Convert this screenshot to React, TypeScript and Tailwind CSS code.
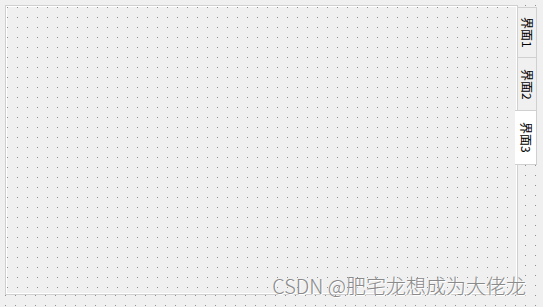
const dots =
  'bg-[conic-gradient(from_270deg_at_1px_1px,#8f8f8f_90deg,transparent_0)] bg-[length:10px_10px]';

const tabs = [
  { label: '界面1', active: false, h: 'h-[51px]' },
  { label: '界面2', active: false, h: 'h-[54px]' },
  { label: '界面3', active: true, h: 'h-[55px]' },
];

export default function App() {
  return (
    <div
      className={`relative w-[543px] h-[307px] overflow-hidden bg-[#f0f0f0] ${dots} bg-[position:5px_5px] font-['Noto_Sans_CJK_SC',sans-serif]`}
    >
      <div className="flex pt-[5px] pl-[5px]">
        <div className="w-[513px] h-[290px] border border-[#d0d0d0]">
          <div className={`w-full h-full border border-white bg-[#f0f0f0] ${dots}`} />
        </div>
        <div className="flex flex-col pt-[2px]">
          {tabs.map((t) =>
            t.active ? (
              <div
                key={t.label}
                className={`${t.h} -mt-px -ml-[3px] w-[22px] flex items-center justify-center bg-white border border-l-0 border-[#d0d0d0]`}
              >
                <span className="[writing-mode:vertical-rl] [text-orientation:sideways] text-[12px] leading-none text-black">
                  {t.label}
                </span>
              </div>
            ) : (
              <div
                key={t.label}
                className={`${t.h} -mt-px first:mt-0 w-[19px] flex items-center justify-center bg-[#f0f0f0] border border-l-0 border-[#d0d0d0]`}
              >
                <span className="[writing-mode:vertical-rl] [text-orientation:sideways] text-[12px] leading-none text-black">
                  {t.label}
                </span>
              </div>
            )
          )}
        </div>
      </div>
      <div className="absolute right-[17px] top-[274px] text-[20px] leading-[24px] font-light text-[#8a8a8a] [text-shadow:1px_1px_0_#ffffff] whitespace-nowrap">
        CSDN @肥宅龙想成为大佬龙
      </div>
    </div>
  );
}
